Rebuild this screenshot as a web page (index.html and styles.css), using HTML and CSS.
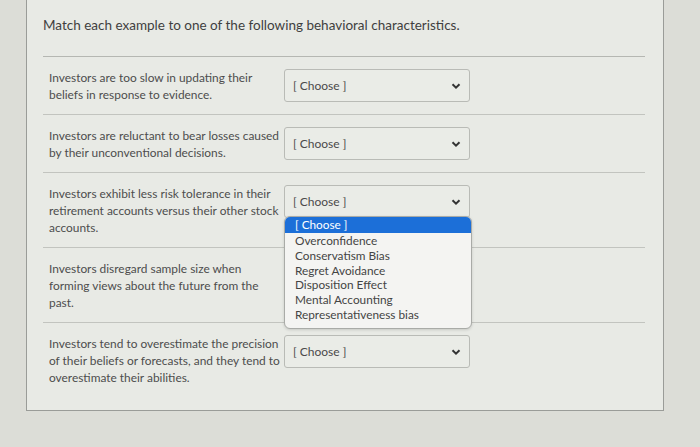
FILE: index.html
```html
<!DOCTYPE html>
<html>
<head>
<meta charset="utf-8">
<link rel="stylesheet" href="styles.css">
</head>
<body>
<div class="panel">
  <div class="header">Match each example to one of the following behavioral characteristics.</div>
  <div class="rows">
    <div class="row">
      <div class="prompt">Investors are too slow in updating their beliefs in response to evidence.</div>
      <div class="select"><span>[ Choose ]</span><svg class="chev" viewBox="0 0 10 6" width="10" height="6"><path d="M1.5 1.2 L5 4.6 L8.5 1.2" fill="none" stroke="#333" stroke-width="2"/></svg></div>
    </div>
    <div class="row">
      <div class="prompt">Investors are reluctant to bear losses caused by their unconventional decisions.</div>
      <div class="select"><span>[ Choose ]</span><svg class="chev" viewBox="0 0 10 6" width="10" height="6"><path d="M1.5 1.2 L5 4.6 L8.5 1.2" fill="none" stroke="#333" stroke-width="2"/></svg></div>
    </div>
    <div class="row">
      <div class="prompt">Investors exhibit less risk tolerance in their retirement accounts versus their other stock accounts.</div>
      <div class="select-wrap">
        <div class="select"><span>[ Choose ]</span><svg class="chev" viewBox="0 0 10 6" width="10" height="6"><path d="M1.5 1.2 L5 4.6 L8.5 1.2" fill="none" stroke="#333" stroke-width="2"/></svg></div>
        <ul class="menu">
          <li class="active">[ Choose ]</li>
          <li>Overconfidence</li>
          <li>Conservatism Bias</li>
          <li>Regret Avoidance</li>
          <li>Disposition Effect</li>
          <li>Mental Accounting</li>
          <li>Representativeness bias</li>
        </ul>
      </div>
    </div>
    <div class="row">
      <div class="prompt">Investors disregard sample size when forming views about the future from the past.</div>
      <div class="select hidden-under"><span>[ Choose ]</span><svg class="chev" viewBox="0 0 10 6" width="10" height="6"><path d="M1.5 1.2 L5 4.6 L8.5 1.2" fill="none" stroke="#333" stroke-width="2"/></svg></div>
    </div>
    <div class="row last">
      <div class="prompt">Investors tend to overestimate the precision of their beliefs or forecasts, and they tend to overestimate their abilities.</div>
      <div class="select"><span>[ Choose ]</span><svg class="chev" viewBox="0 0 10 6" width="10" height="6"><path d="M1.5 1.2 L5 4.6 L8.5 1.2" fill="none" stroke="#333" stroke-width="2"/></svg></div>
    </div>
  </div>
</div>
</body>
</html>
```

FILE: styles.css
```css
* { box-sizing: border-box; }
html, body {
  margin: 0;
  padding: 0;
}
body {
  background: #dcddd7;
  font-family: Lato, "Open Sans", sans-serif;
  color: #4a4a4a;
  width: 700px;
  height: 447px;
  overflow: hidden;
}
.panel {
  margin-left: 26px;
  width: 638px;
  height: 411px;
  background: #e8eae5;
  border: 1px solid #9a9c98;
  border-top: none;
  display: flex;
  flex-direction: column;
}
.header {
  margin: 0 18px 0 16px;
  padding: 16px 0 0 0;
  height: 57px;
  border-bottom: 1px solid #b5b7b2;
  font-size: 13.5px;
  line-height: 18px;
  color: #3f3f3f;
}
.rows {
  margin: 0 18px 0 16px;
  display: flex;
  flex-direction: column;
  flex: 1;
}
.row {
  display: flex;
  align-items: flex-start;
  padding: 12px 0 11px 6px;
  border-bottom: 1px solid #c2c4bf;
}
.row.last {
  border-bottom: none;
  flex: 1;
}
.prompt {
  width: 235px;
  font-size: 11.9px;
  line-height: 17px;
  color: #4d4d4d;
}
.select-wrap {
  position: relative;
}
.select {
  width: 186px;
  height: 33px;
  border: 1px solid #b9bbb6;
  border-radius: 3px;
  background: #eaece7;
  display: flex;
  align-items: center;
  justify-content: space-between;
  padding: 0 8px 0 8px;
  font-size: 12px;
  color: #4a4a4a;
}
.hidden-under {
  visibility: hidden;
}
.select span {
  margin-top: -1px;
}
.chev {
  display: block;
}
.menu {
  position: absolute;
  left: 0;
  top: 31px;
  width: 188px;
  margin: 0;
  padding: 0 0 5px 0;
  list-style: none;
  background: #f4f4f2;
  border: 1px solid #a9aba7;
  border-radius: 6px;
  overflow: hidden;
  box-shadow: 0 1px 3px rgba(0,0,0,0.15);
  z-index: 2;
}
.menu li {
  font-size: 11.8px;
  line-height: 14.8px;
  padding: 0 0 0 10px;
  color: #444;
}
.menu li.active {
  background: #1c6fd8;
  color: #fff;
  line-height: 16px;
  margin-bottom: 1px;
}
```
